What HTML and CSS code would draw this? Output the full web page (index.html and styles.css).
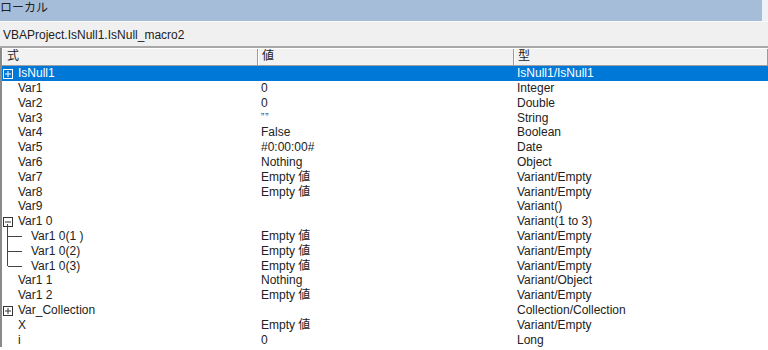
FILE: index.html
```html
<!DOCTYPE html>
<html lang="ja">
<head>
<meta charset="utf-8">
<link rel="stylesheet" href="styles.css">
</head>
<body>
<div class="win">
  <div class="title">ローカル</div>
  <div class="context">VBAProject.IsNull1.IsNull_macro2</div>
  <div class="list">
    <div class="head">
      <div class="hc">式</div>
      <div class="hc">値</div>
      <div class="hc">型</div>
    </div>
    <div class="row sel">
      <div class="c name"><svg class="box" width="10" height="10" viewBox="0 0 10 10"><rect x="0.5" y="0.5" width="9" height="9" fill="none" stroke="#fff"/><path d="M2 5H8M5 2V8" stroke="#fff"/></svg>IsNull1</div>
      <div class="c"></div>
      <div class="c">IsNull1/IsNull1</div>
    </div>
    <div class="row"><div class="c name">Var1</div><div class="c">0</div><div class="c">Integer</div></div>
    <div class="row"><div class="c name">Var2</div><div class="c">0</div><div class="c">Double</div></div>
    <div class="row"><div class="c name">Var3</div><div class="c q">””</div><div class="c">String</div></div>
    <div class="row"><div class="c name">Var4</div><div class="c">False</div><div class="c">Boolean</div></div>
    <div class="row"><div class="c name">Var5</div><div class="c">#0:00:00#</div><div class="c">Date</div></div>
    <div class="row"><div class="c name">Var6</div><div class="c">Nothing</div><div class="c">Object</div></div>
    <div class="row"><div class="c name">Var7</div><div class="c">Empty 値</div><div class="c">Variant/Empty</div></div>
    <div class="row"><div class="c name">Var8</div><div class="c">Empty 値</div><div class="c">Variant/Empty</div></div>
    <div class="row"><div class="c name">Var9</div><div class="c"></div><div class="c">Variant()</div></div>
    <div class="row"><div class="c name"><svg class="box" width="10" height="10" viewBox="0 0 10 10"><rect x="0.5" y="0.5" width="9" height="9" fill="#fff" stroke="#333"/><path d="M2 5H8" stroke="#333"/></svg>Var1 0</div><div class="c"></div><div class="c">Variant(1 to 3)</div></div>
    <div class="row"><div class="c name child"><span class="tee"></span>Var1 0(1 )</div><div class="c">Empty 値</div><div class="c">Variant/Empty</div></div>
    <div class="row"><div class="c name child"><span class="tee"></span>Var1 0(2)</div><div class="c">Empty 値</div><div class="c">Variant/Empty</div></div>
    <div class="row"><div class="c name child"><span class="tee last"></span>Var1 0(3)</div><div class="c">Empty 値</div><div class="c">Variant/Empty</div></div>
    <div class="row"><div class="c name">Var1 1</div><div class="c">Nothing</div><div class="c">Variant/Object</div></div>
    <div class="row"><div class="c name">Var1 2</div><div class="c">Empty 値</div><div class="c">Variant/Empty</div></div>
    <div class="row"><div class="c name"><svg class="box" width="10" height="10" viewBox="0 0 10 10"><rect x="0.5" y="0.5" width="9" height="9" fill="#fff" stroke="#333"/><path d="M2 5H8M5 2V8" stroke="#333"/></svg>Var_Collection</div><div class="c"></div><div class="c">Collection/Collection</div></div>
    <div class="row"><div class="c name">X</div><div class="c">Empty 値</div><div class="c">Variant/Empty</div></div>
    <div class="row"><div class="c name">i</div><div class="c">0</div><div class="c">Long</div></div>
  </div>
</div>
</body>
</html>
```
FILE: styles.css
```css
html, body {
  margin: 0;
  padding: 0;
  background: #ffffff;
}
body {
  width: 768px;
  height: 350px;
  overflow: hidden;
  font-family: "Liberation Sans", "Noto Sans CJK JP", sans-serif;
  font-size: 12px;
  color: #222222;
}
.win {
  display: flex;
  flex-direction: column;
}
.title {
  height: 21px;
  line-height: 16px;
  background: #a5bdd8;
  color: #222;
  border-right: 6px solid #eef1f5;
}
.context {
  height: 24px;
  line-height: 26px;
  background: #f0f0f0;
  border-top: 1px solid #fafafa;
  border-bottom: 2px solid #a8a8a8;
  padding-left: 3px;
}
.list {
  border-left: 2px solid #8a8a8a;
  display: flex;
  flex-direction: column;
}
.head {
  display: grid;
  grid-template-columns: 256px 256px 1fr;
  height: 16px;
  background: #f2f2f2;
  border-bottom: 1px solid #a0a0a0;
  border-top: 1px solid #ffffff;
}
.hc {
  line-height: 14px;
  padding-left: 3px;
  border-right: 1px solid #9a9a9a;
  border-left: 1px solid #ffffff;
}
.hc:first-child {
  padding-left: 4px;
}
.row {
  display: grid;
  grid-template-columns: 256px 256px 1fr;
  height: 14.8px;
  line-height: 14.8px;
  white-space: nowrap;
}
.row.sel {
  background: #0078d7;
  color: #ffffff;
  height: 15px;
}
.c {
  padding-left: 3px;
  position: relative;
}
.c.name {
  padding-left: 16px;
}
.c.name.child {
  padding-left: 29px;
}
.box {
  position: absolute;
  left: 1px;
  top: 3px;
}
.tee {
  position: absolute;
  left: 5px;
  top: -5px;
  width: 14px;
  height: 20px;
  border-left: 1px solid #444;
}
.tee::after {
  content: "";
  position: absolute;
  left: 0;
  top: 12px;
  width: 14px;
  border-top: 1px solid #444;
}
.tee.last {
  height: 12px;
}
.q {
  font-size: 10px;
  letter-spacing: 1px;
  color: #444;
}
```
